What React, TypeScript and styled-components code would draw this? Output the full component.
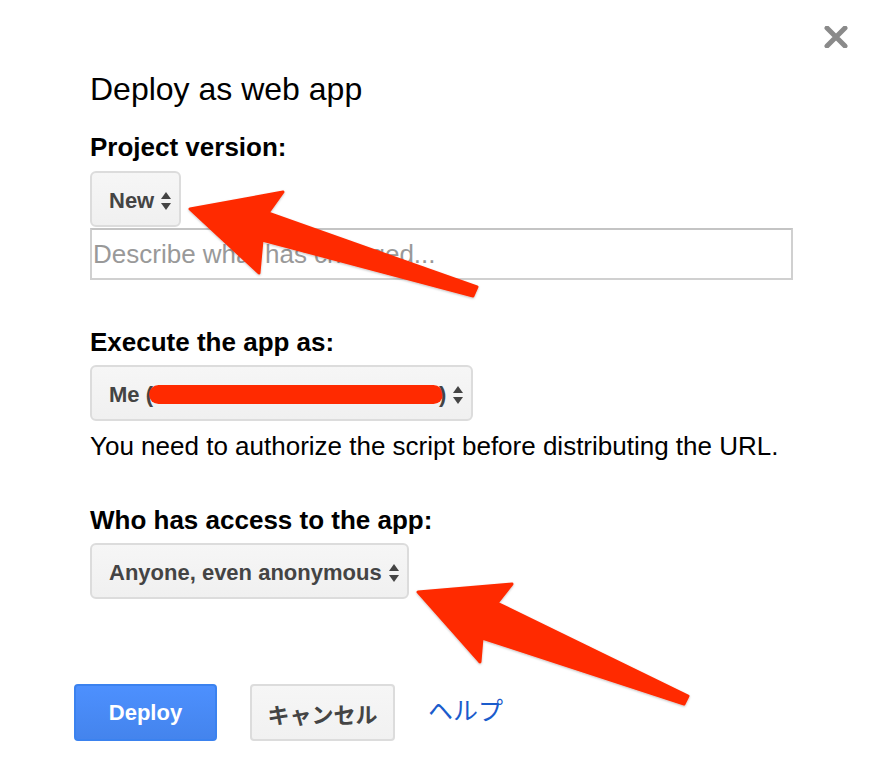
import React from "react";
import styled, { createGlobalStyle } from "styled-components";

const Global = createGlobalStyle`
  html, body { margin: 0; padding: 0; background: #ffffff; }
  body { font-family: "Liberation Sans", Arial, "Noto Sans CJK JP", sans-serif; color: #000; }
  * { box-sizing: border-box; }
`;

const Page = styled.div`
  position: relative;
  width: 882px;
  height: 784px;
  overflow: hidden;
  padding: 26px 0 0 90px;
  display: flex;
  flex-direction: column;
  align-items: flex-start;
`;

const CloseRow = styled.div`
  align-self: stretch;
  display: flex;
  justify-content: flex-end;
  padding-right: 34px;
  height: 22px;
`;

const CloseButton = styled.button`
  width: 24px;
  height: 22px;
  padding: 0;
  border: 0;
  background: none;
  display: flex;
  align-items: center;
  justify-content: center;
  cursor: pointer;
`;

const Title = styled.h1`
  margin: 23px 0 0 0;
  font-size: 32px;
  line-height: 36px;
  font-weight: normal;
  color: #000;
`;

const Label = styled.div<{ $gap: number }>`
  margin-top: ${(p) => p.$gap}px;
  font-size: 26px;
  line-height: 30px;
  font-weight: bold;
  color: #000;
`;

const Select = styled.div<{ $gap: number }>`
  margin-top: ${(p) => p.$gap}px;
  height: 56px;
  display: inline-flex;
  align-items: center;
  gap: 7px;
  padding: 3px 8px 0 17px;
  border: 2px solid #dcdcdc;
  border-radius: 6px;
  background: linear-gradient(#f6f6f6, #f0f0f0);
  font-size: 22px;
  font-weight: bold;
  color: #444;
  white-space: nowrap;
`;

const Redaction = styled.span`
  display: inline-block;
  width: 294px;
  height: 19px;
  margin: 0 -4px;
  vertical-align: -2px;
  background: #ff2a00;
  border-radius: 10px;
`;

const TextInput = styled.input`
  margin-top: 1px;
  width: 703px;
  height: 52px;
  border: 2px solid #d0d0d0;
  border-top-color: #c4c4c4;
  padding: 0 0 0 1px;
  font-family: "Liberation Sans", Arial, sans-serif;
  font-size: 26px;
  color: #222;
  outline: none;
  &::placeholder { color: #999; }
`;

const Note = styled.div`
  margin-top: 10px;
  font-size: 26px;
  line-height: 30px;
  color: #000;
`;

const ButtonRow = styled.div`
  margin: 85px 0 0 -16px;
  display: flex;
  align-items: center;
`;

const Button = styled.button<{ $primary?: boolean; $w: number }>`
  width: ${(p) => p.$w}px;
  height: 57px;
  border-radius: 4px;
  border: 2px solid ${(p) => (p.$primary ? "#3b82ef" : "#dcdcdc")};
  background: ${(p) =>
    p.$primary ? "linear-gradient(#4d90fe, #4484ed)" : "linear-gradient(#f6f6f6, #f1f1f1)"};
  color: ${(p) => (p.$primary ? "#ffffff" : "#444")};
  font-family: "Liberation Sans", Arial, "Noto Sans CJK JP", sans-serif;
  font-size: 22px;
  font-weight: bold;
  padding: 0;
  margin-right: 33px;
  cursor: pointer;
`;

const HelpLink = styled.a`
  font-family: "Noto Sans CJK JP", sans-serif;
  font-size: 25px;
  color: #1a5ccc;
  text-decoration: none;
  line-height: 30px;
  margin-top: -7px;
`;

const Annotations = styled.svg`
  position: absolute;
  left: 0;
  top: 0;
  width: 882px;
  height: 784px;
  pointer-events: none;
`;

const SortArrows = () => (
  <svg width="10" height="18" viewBox="0 0 10 18">
    <path d="M5 0 L10 7 L0 7 Z" fill="#444" />
    <path d="M0 11 L10 11 L5 18 Z" fill="#444" />
  </svg>
);

export default function App() {
  return (
    <>
      <Global />
      <Page>
        <CloseRow>
          <CloseButton aria-label="Close">
            <svg width="24" height="22" viewBox="0 0 24 22">
              <path
                d="M3 2 L21 20 M21 2 L3 20"
                stroke="#8a8a8a"
                strokeWidth="5"
                strokeLinecap="round"
              />
            </svg>
          </CloseButton>
        </CloseRow>
        <Title>Deploy as web app</Title>
        <Label $gap={25}>Project version:</Label>
        <Select $gap={9}>
          <span>New</span>
          <SortArrows />
        </Select>
        <TextInput placeholder="Describe what has changed..." />
        <Label $gap={47}>Execute the app as:</Label>
        <Select $gap={8}>
          <span>
            Me (<Redaction />)
          </span>
          <SortArrows />
        </Select>
        <Note>You need to authorize the script before distributing the URL.</Note>
        <Label $gap={44}>Who has access to the app:</Label>
        <Select $gap={8}>
          <span>Anyone, even anonymous</span>
          <SortArrows />
        </Select>
        <ButtonRow>
          <Button $primary $w={143}>Deploy</Button>
          <Button $w={145}>キャンセル</Button>
          <HelpLink href="#">ヘルプ</HelpLink>
        </ButtonRow>
        <Annotations viewBox="0 0 882 784">
          <defs>
            <filter id="sh" x="-10%" y="-10%" width="120%" height="120%">
              <feDropShadow dx="0" dy="1" stdDeviation="1" floodColor="#000" floodOpacity="0.25" />
            </filter>
          </defs>
          <polygon
            points="190,209 283,192 268,213 477,287 473,296 262,240 259,273"
            fill="#ff2a00"
            stroke="#ff2a00"
            strokeWidth="3"
            strokeLinejoin="round"
            filter="url(#sh)"
          />
          <polygon
            points="418,592 512,584 497,603 688,696 684,704 482,638 480,662"
            fill="#ff2a00"
            stroke="#ff2a00"
            strokeWidth="3"
            strokeLinejoin="round"
            filter="url(#sh)"
          />
        </Annotations>
      </Page>
    </>
  );
}
